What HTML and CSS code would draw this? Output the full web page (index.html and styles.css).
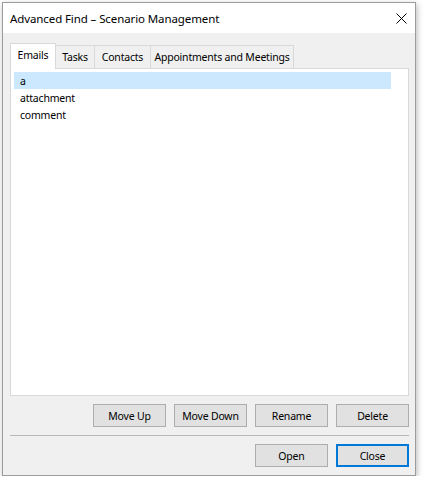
FILE: index.html
```html
<!DOCTYPE html>
<html>
<head>
<meta charset="utf-8">
<link rel="stylesheet" href="styles.css">
</head>
<body>
<div class="window">
  <div class="titlebar">
    <span class="title">Advanced Find – Scenario Management</span>
    <svg class="close" width="11" height="11" viewBox="0 0 11 11"><path d="M0.5 0.5 L10.5 10.5 M10.5 0.5 L0.5 10.5" stroke="#000" stroke-width="1" fill="none"/></svg>
  </div>
  <div class="content">
    <div class="tabs">
      <div class="tab selected t-emails">Emails</div>
      <div class="tab t-tasks">Tasks</div>
      <div class="tab t-contacts">Contacts</div>
      <div class="tab t-appts">Appointments and Meetings</div>
    </div>
    <div class="panel">
      <ul class="list">
        <li class="row active">a</li>
        <li class="row">attachment</li>
        <li class="row">comment</li>
      </ul>
    </div>
    <div class="btnrow">
      <button class="btn">Move Up</button>
      <button class="btn">Move Down</button>
      <button class="btn">Rename</button>
      <button class="btn">Delete</button>
    </div>
    <div class="sep"></div>
    <div class="btnrow">
      <button class="btn">Open</button>
      <button class="btn default">Close</button>
    </div>
  </div>
</div>
</body>
</html>
```
FILE: styles.css
```css
html, body {
  margin: 0;
  padding: 0;
  background: #ffffff;
}
body {
  font-family: "Noto Sans", "Open Sans", sans-serif;
  font-size: 10.5px;
  letter-spacing: -0.2px;
  color: #000;
}
.window {
  margin: 2px 0 0 2px;
  width: 414px;
  height: 474px;
  box-sizing: border-box;
  border: 1px solid #9c9c9c;
  box-shadow: 1px 2px 6px rgba(0, 0, 0, 0.28);
  background: #f0f0f0;
  display: flex;
  flex-direction: column;
}
.titlebar {
  height: 30px;
  background: #ffffff;
  display: flex;
  align-items: center;
  justify-content: space-between;
  padding: 0 8px 0 7px;
}
.title {
  font-size: 11.5px;
  letter-spacing: -0.1px;
  color: #000;
}
.close {
  display: block;
}
.content {
  flex: 1;
  display: flex;
  flex-direction: column;
  padding: 10px 6px 8px 7px;
}
.tabs {
  display: flex;
  height: 25px;
  align-items: flex-start;
  position: relative;
  z-index: 1;
}
.tab {
  box-sizing: border-box;
  height: 23px;
  margin-top: 2px;
  margin-left: -1px;
  border: 1px solid #d9d9d9;
  border-bottom: none;
  background: #f0f0f0;
  line-height: 22px;
  text-align: center;
  white-space: nowrap;
}
.tab.selected {
  margin-top: 0;
  margin-left: 0;
  height: 26px;
  background: #ffffff;
  line-height: 22px;
  position: relative;
  z-index: 2;
}
.t-emails { width: 46px; }
.t-tasks { width: 40px; }
.t-contacts { width: 57px; }
.t-appts { width: 144px; }
.panel {
  box-sizing: border-box;
  height: 328px;
  background: #ffffff;
  border: 1px solid #d9d9d9;
  padding: 3px 0 0 3px;
}
.list {
  list-style: none;
  margin: 0;
  padding: 0;
  width: 377px;
}
.row {
  box-sizing: border-box;
  height: 17px;
  padding: 2px 0 0 6px;
  line-height: 15px;
}
.row.active {
  background: #cce8ff;
}
.btnrow {
  display: flex;
  justify-content: flex-end;
  gap: 8px;
  margin-top: 8px;
}
.btn {
  box-sizing: border-box;
  width: 73px;
  height: 23px;
  margin: 0;
  padding: 0;
  background: #e1e1e1;
  border: 1px solid #adadad;
  border-radius: 0;
  font-family: "Noto Sans", "Open Sans", sans-serif;
  font-size: 10.5px;
  letter-spacing: -0.2px;
  color: #000;
}
.btn.default {
  border: 2px solid #0078d7;
}
.sep {
  height: 1px;
  background: #b8b8b8;
  margin-top: 8px;
}
```
